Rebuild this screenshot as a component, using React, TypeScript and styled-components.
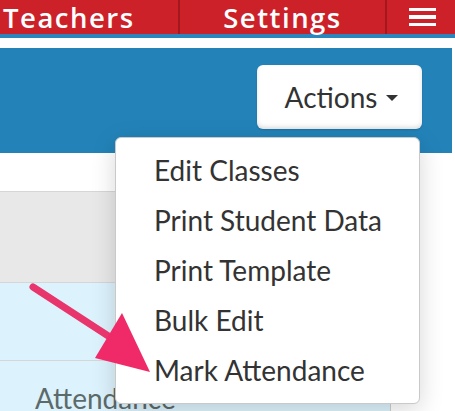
import styled, { createGlobalStyle } from "styled-components";

const GlobalStyle = createGlobalStyle`
  html, body {
    margin: 0;
    padding: 0;
    background: #ffffff;
    overflow: hidden;
  }
  body {
    font-family: "Lato", "Open Sans", sans-serif;
  }
`;

const Page = styled.div`
  position: relative;
  width: 455px;
  height: 411px;
  overflow: hidden;
  background: #ffffff;
`;

const TopBar = styled.nav`
  display: flex;
  height: 34px;
  background: #cd2129;
  border-bottom: 4px solid #2a86bd;
  font-family: "Open Sans", "Noto Sans", sans-serif;
  font-weight: 600;
  font-size: 27.5px;
  color: #ffffff;
`;

const NavItem = styled.div<{ $width: number; $align?: string; $divider?: boolean }>`
  width: ${(p) => p.$width}px;
  display: flex;
  align-items: center;
  justify-content: ${(p) => p.$align || "center"};
  padding-left: ${(p) => (p.$align === "flex-start" ? "3px" : "0")};
  box-sizing: border-box;
  border-left: ${(p) => (p.$divider ? "2px solid #a3181e" : "none")};
  line-height: 32px;
  padding-top: 2px;
  letter-spacing: 1.5px;
`;

const Burger = styled.div`
  display: flex;
  flex-direction: column;
  gap: 4px;
  margin: -2px 0 0 2px;

  > span {
    display: block;
    width: 27px;
    height: 3.5px;
    background: #ffffff;
  }
`;

const Panel = styled.section`
  margin: 10px 3px 0 0;
  height: 105px;
  background: #2383b9;
  display: flex;
  justify-content: flex-end;
  align-items: flex-start;
  padding: 17px 30px 0 0;
  box-sizing: border-box;
`;

const ActionsWrap = styled.div`
  position: relative;
`;

const ActionsButton = styled.button`
  width: 165px;
  height: 64px;
  border: none;
  border-radius: 6px;
  background: #ffffff;
  box-shadow: inset 0 -2px 4px rgba(0, 0, 0, 0.12), 0 1px 2px rgba(0, 0, 0, 0.15);
  font-family: "Lato", sans-serif;
  font-size: 28px;
  color: #333333;
  display: flex;
  align-items: center;
  justify-content: center;
  gap: 9px;
  padding: 0 0 0 4px;
`;

const Caret = styled.span`
  width: 0;
  height: 0;
  border-left: 6.5px solid transparent;
  border-right: 6.5px solid transparent;
  border-top: 6.5px solid #333333;
  margin-top: 2px;
`;

const Menu = styled.ul`
  position: absolute;
  top: 72px;
  right: 2px;
  width: 305px;
  height: 267px;
  margin: 0;
  padding: 7px 0 0 0;
  box-sizing: border-box;
  list-style: none;
  background: #ffffff;
  border: 1px solid #c9c9c9;
  border-radius: 6px;
  box-shadow: 0 6px 24px rgba(0, 0, 0, 0.16);
  z-index: 5;
`;

const MenuItem = styled.li`
  height: 50px;
  line-height: 50px;
  padding-left: 38px;
  font-family: "Lato", sans-serif;
  font-size: 28px;
  color: #333333;
  white-space: nowrap;
`;

const Table = styled.div`
  width: 390px;
  border-right: 1px solid #cfcfcf;
`;

const Row = styled.div<{ $bg: string; $height: number }>`
  height: ${(p) => p.$height}px;
  background: ${(p) => p.$bg};
  border-bottom: 1px solid #d6d6d6;
  box-sizing: border-box;
  display: flex;
  align-items: flex-start;
  padding-left: 35px;
  font-family: "Lato", sans-serif;
  font-size: 28px;
  color: #5d6a6a;
`;

const CellText = styled.span`
  line-height: 74px;
`;

const Arrow = styled.svg`
  position: absolute;
  left: 0;
  top: 0;
  z-index: 6;
  pointer-events: none;
`;

const items = [
  "Edit Classes",
  "Print Student Data",
  "Print Template",
  "Bulk Edit",
  "Mark Attendance",
];

export default function App() {
  return (
    <Page>
      <GlobalStyle />
      <TopBar>
        <NavItem $width={178} $align="flex-start">
          Teachers
        </NavItem>
        <NavItem $width={207} $divider>
          Settings
        </NavItem>
        <NavItem $width={70} $divider>
          <Burger>
            <span />
            <span />
            <span />
          </Burger>
        </NavItem>
      </TopBar>
      <Panel>
        <ActionsWrap>
          <ActionsButton>
            Actions <Caret />
          </ActionsButton>
          <Menu>
            {items.map((t) => (
              <MenuItem key={t}>{t}</MenuItem>
            ))}
          </Menu>
        </ActionsWrap>
      </Panel>
      <Table>
        <Row $bg="#ffffff" $height={39} />
        <Row $bg="#e8e8e8" $height={91} />
        <Row $bg="#dcf2fc" $height={78} />
        <Row $bg="#dcf2fc" $height={60}>
          <CellText>Attendance</CellText>
        </Row>
      </Table>
      <Arrow width="455" height="411" viewBox="0 0 455 411">
        <line x1="33" y1="287" x2="116" y2="341" stroke="#e8356c" strokeWidth="7" strokeLinecap="round" />
        <polygon points="95,358 122,313 150,372" fill="#f02a68" />
      </Arrow>
    </Page>
  );
}
